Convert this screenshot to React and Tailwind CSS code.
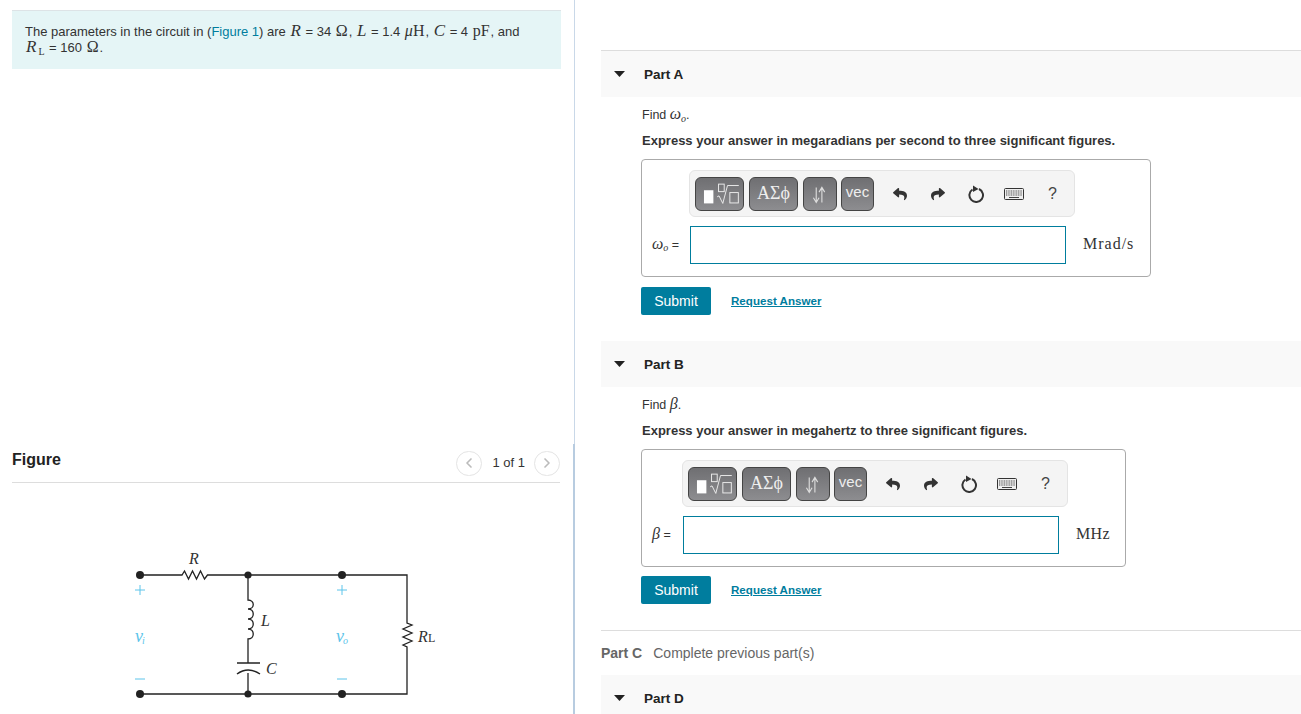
import React from 'react';
import { ChevronLeft, ChevronRight } from 'lucide-react';
import { FaReply, FaShare } from 'react-icons/fa';

const M = ({ children }) => (
  <span className="mx-[1px] font-['Liberation_Serif',serif] text-[16px] leading-[0] text-[#333]">{children}</span>
);
const T = ({ children }) => (
  <i className="mx-[1px] font-['Liberation_Serif',serif] text-[17px] leading-[0] text-[#333]">{children}</i>
);
const I = ({ children }) => (
  <i className="font-['Liberation_Serif',serif] text-[16px] leading-none text-[#333]">{children}</i>
);
const Sub = ({ children }) => <sub className="text-[10px] leading-[0]">{children}</sub>;

const Circuit = () => (
  <svg viewBox="0 0 330 174" className="block w-[330px] h-[174px]">
    <g fill="none" stroke="#222" strokeWidth="1.3">
      <path d="M20 35H62l2.500 -4 4 8 4 -8 4 8 4 -8 4 8 3 -4H222H287V83l5 2 -9 4 9 4 -9 4 9 4 -9 4 4 2V154H20" />
      <path d="M128 35V60c7 0 7 9 0 9c7 0 7 10 0 10c7 0 7 10 0 10c7 0 7 10 0 10V123M128 133V154" />
      <path d="M117 123H140" strokeWidth="1.500" />
      <path d="M117 134Q128 126 140 134" strokeWidth="1.500" />
    </g>
    <g fill="#222">
      <circle cx="20" cy="35" r="4" />
      <circle cx="128" cy="35" r="3.600" />
      <circle cx="222" cy="35" r="4" />
      <circle cx="20" cy="154" r="4" />
      <circle cx="128" cy="154" r="3.600" />
      <circle cx="222" cy="154" r="4" />
    </g>
    <g stroke="#5cc4ea" strokeWidth="1" fill="none">
      <path d="M15 50H25M20 45V55M217 50H227M222 45V55M15 139H25M217 139H227" />
    </g>
    <g fontFamily="'Liberation Serif', serif" fontStyle="italic" fontSize="16" fill="#333">
      <text x="69" y="24">R</text>
      <text x="141" y="86">L</text>
      <text x="146" y="134">C</text>
      <text x="298" y="102">R</text>
      <text x="308" y="102" fontStyle="normal" fontSize="12">L</text>
    </g>
    <g fontFamily="'Liberation Serif', serif" fontStyle="italic" fill="#5cc4ea">
      <text x="15" y="102" fontSize="18">v</text>
      <text x="22" y="104" fontSize="10">i</text>
      <text x="216" y="102" fontSize="18">v</text>
      <text x="223" y="104" fontSize="10">o</text>
    </g>
  </svg>
);

const Caret = () => (
  <svg viewBox="0 0 11 6" className="w-[11px] h-[6px] fill-[#222]">
    <path d="M0 0H11L5.500 6Z" />
  </svg>
);

const PartHeader = ({ name }) => (
  <div className="flex items-center h-[46px] bg-[#f9f9f9] pl-[13px]">
    <Caret />
    <span className="ml-[19px] pt-[2px] text-[13.500px] font-bold text-[#222]">{name}</span>
  </div>
);

const RootIcon = () => (
  <svg viewBox="0 0 49 34" className="w-[47px] h-[32px]">
    <rect x="8" y="13" width="10" height="14" fill="#fff" />
    <g fill="none" stroke="#eee" strokeWidth="1">
      <rect x="23.500" y="6.500" width="6" height="8" />
      <rect x="35.500" y="15.500" width="9" height="11" />
      <path d="M22 20l2 -1 4 8 5 -19H45" />
    </g>
  </svg>
);

const UpDown = () => (
  <svg viewBox="0 0 34 34" className="w-[32px] h-[32px]">
    <g fill="none" stroke="#ddd" strokeWidth="1.200">
      <path d="M13 10V25M10 21l3 5 3 -5" />
      <path d="M19 26V11M16 15l3 -5 3 5" />
    </g>
  </svg>
);

const Keyboard = () => (
  <svg viewBox="0 0 20 12" className="w-[20px] h-[12px]">
    <rect x="0.500" y="0.500" width="19" height="11" rx="1" fill="#eee" stroke="#333" />
    <path d="M2 3H18M2 5H18M2 7H18" stroke="#444" strokeWidth="1" strokeDasharray="1 0.700" />
    <path d="M5 9.500H15" stroke="#444" strokeWidth="1" />
  </svg>
);

const Reset = () => (
  <svg viewBox="0 0 18 18" className="w-[18px] h-[18px]" fill="none">
    <path d="M5.500 4.500a6.800 6.800 0 1 0 6.500 -0.500" stroke="#333" strokeWidth="2" />
    <path d="M6 0.500L11.500 4L6 7Z" fill="#333" />
  </svg>
);

const toolBtn =
  'flex items-center justify-center h-[34px] rounded-[6px] border border-[#444] bg-gradient-to-b from-[#6f6f72] to-[#8d8d90] text-[#eee]';

const Toolbar = ({ className }) => (
  <div className={`flex items-center w-[386px] h-[47px] rounded-[6px] border border-[#e4e4e4] bg-[#f4f4f4] pl-[5px] ${className}`}>
    <button className={`${toolBtn} w-[49px]`}>
      <RootIcon />
    </button>
    <button className={`${toolBtn} w-[49px] ml-[5px] font-['Liberation_Serif',serif] text-[18px]`}>AΣϕ</button>
    <button className={`${toolBtn} w-[34px] ml-[5px]`}>
      <UpDown />
    </button>
    <button className={`${toolBtn} w-[33px] ml-[4px] pb-[2px] font-['Liberation_Sans',sans-serif] text-[15px]`}>vec</button>
    <div className="flex items-center ml-[19px] text-[#333]">
      <FaReply className="w-[14px] h-[14px]" />
      <FaShare className="w-[14px] h-[14px] ml-[24px]" />
      <span className="ml-[22px]">
        <Reset />
      </span>
      <span className="ml-[19px]">
        <Keyboard />
      </span>
      <span className="ml-[24px] text-[16px] text-[#444]">?</span>
    </div>
  </div>
);

const AnswerBox = ({ width, toolbarClass, labelWidth, label, unit, unitClass }) => (
  <div className={`mt-[9px] ml-[40px] h-[118px] rounded-[4px] border border-[#aaa] ${width}`}>
    <Toolbar className={`mt-[10px] ${toolbarClass}`} />
    <div className="flex items-center mt-[9px] pl-[10px]">
      <div className={`shrink-0 whitespace-nowrap text-[12.500px] text-[#333] ${labelWidth}`}>{label}</div>
      <input
        type="text"
        className="w-[376px] h-[38px] shrink-0 border border-[#007d9d] bg-white"
        aria-label="answer"
      />
      <div className={`pl-[17px] pb-[2px] font-['Liberation_Serif',serif] text-[16px] text-[#333] whitespace-nowrap ${unitClass}`}>
        {unit}
      </div>
    </div>
  </div>
);

const Actions = ({ className }) => (
  <div className={`flex items-center ml-[40px] ${className}`}>
    <button className="w-[70px] h-[28px] rounded-[2px] bg-[#007d9e] text-white text-[14px]">Submit</button>
    <a href="#" className="ml-[20px] text-[11.600px] font-bold text-[#007d9e] underline">
      Request Answer
    </a>
  </div>
);

const Prompt = ({ find, express }) => (
  <div className="ml-[41px]">
    <div className="mt-[9px] h-[18px] text-[12.500px] text-[#333] leading-[18px]">Find {find}.</div>
    <div className="mt-[8px] h-[18px] text-[13px] font-bold text-[#333] leading-[18px]">{express}</div>
  </div>
);

export default function App() {
  return (
    <div className="flex w-[1301px] h-[714px] overflow-hidden bg-white font-['Liberation_Sans',Arial,sans-serif]">
      <div className="flex flex-col w-[575px] shrink-0">
        <div className="h-[444px] border-r border-[#c9d8e8] pt-[10px] pl-[12px] pr-[13px]">
          <div className="h-[59px] border-t border-[#dde3e6] bg-[#e5f5f6] pt-[13px] pl-[13px] text-[13px] leading-[16px] text-[#333]">
            The parameters in the circuit in (<a href="#" className="text-[#007d9e]">Figure 1</a>) are{' '}
            <T>R</T> = 34 <M>Ω</M>, <T>L</T> = 1.4 <M><i>μ</i>H</M>, <T>C</T> = 4 <M>pF</M>, and
            <br />
            <T>R</T><M><Sub>L</Sub></M> = 160 <M>Ω</M>.
          </div>
        </div>
        <div className="flex-1 border-r-2 border-[#b8cce0]">
          <div className="flex items-center h-[39px] ml-[12px] mr-[13px] border-b border-[#ddd]">
            <span className="pb-[6px] text-[16px] font-bold text-[#222]">Figure</span>
            <div className="ml-auto flex items-center text-[13px] text-[#333]">
              <span className="flex items-center justify-center w-[26px] h-[25px] rounded-full border border-[#e4e4e4] text-[#bbb]">
                <ChevronLeft className="w-[16px] h-[16px]" strokeWidth={2.500} />
              </span>
              <span className="ml-[10px] mr-[9px]">1 of 1</span>
              <span className="flex items-center justify-center w-[26px] h-[25px] rounded-full border border-[#e4e4e4] text-[#bbb]">
                <ChevronRight className="w-[16px] h-[16px]" strokeWidth={2.500} />
              </span>
            </div>
          </div>
          <div className="mt-[57px] ml-[120px]">
            <Circuit />
          </div>
        </div>
      </div>

      <div className="flex-1 pl-[26px] pt-[50px]">
        <div className="border-t border-[#ddd]">
          <PartHeader name="Part A" />
        </div>
        <Prompt
          find={<I>ω<Sub>o</Sub></I>}
          express="Express your answer in megaradians per second to three significant figures."
        />
        <AnswerBox
          width="w-[510px]"
          toolbarClass="ml-[47px]"
          labelWidth="w-[38px]"
          label={<><I>ω<Sub>o</Sub></I> =</>}
          unit="Mrad/s"
          unitClass="tracking-[1px]"
        />
        <Actions className="mt-[10px]" />

        <div className="mt-[26px]">
          <PartHeader name="Part B" />
        </div>
        <Prompt
          find={<I>β</I>}
          express="Express your answer in megahertz to three significant figures."
        />
        <AnswerBox
          width="w-[485px]"
          toolbarClass="ml-[40px]"
          labelWidth="w-[31px]"
          label={<><I>β</I> =</>}
          unit="MHz"
          unitClass="tracking-[0.300px]"
        />
        <Actions className="mt-[9px]" />

        <div className="mt-[26px] border-t border-[#ddd] flex items-center h-[45px] text-[14px]">
          <span className="font-bold text-[#666]">Part C</span>
          <span className="ml-[11px] text-[#666]">Complete previous part(s)</span>
        </div>
        <PartHeader name="Part D" />
      </div>
    </div>
  );
}
